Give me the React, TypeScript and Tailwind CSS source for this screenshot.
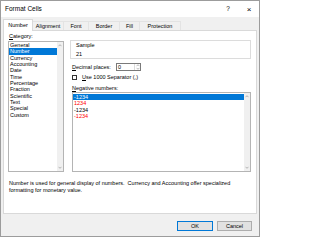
const categories = [
    'General',
    'Number',
    'Currency',
    'Accounting',
    'Date',
    'Time',
    'Percentage',
    'Fraction',
    'Scientific',
    'Text',
    'Special',
    'Custom',
];

const negatives = [
    { label: '-1234', red: false },
    { label: '1234', red: true },
    { label: '-1234', red: false },
    { label: '-1234', red: true },
];

const tabs = [
    { label: 'Number', w: 'w-[30px]' },
    { label: 'Alignment', w: 'w-[31px]' },
    { label: 'Font', w: 'w-[25px]' },
    { label: 'Border', w: 'w-[31px]' },
    { label: 'Fill', w: 'w-[20px]' },
    { label: 'Protection', w: 'w-[41px]' },
];

function Arrow({ down }: { down?: boolean }) {
    return (
        <svg width="4" height="3" viewBox="0 0 4 3" className="block">
            <path d={down ? 'M0.5 0.8 L2 2.3 L3.5 0.8' : 'M0.5 2.2 L2 0.7 L3.5 2.2'} fill="none" stroke="#9a9a9a" strokeWidth="0.7" />
        </svg>
    );
}

function ScrollBar() {
    return (
        <div className="flex h-full w-[6px] flex-col items-center justify-between bg-[#f0f0f0] py-[2px]">
            <Arrow />
            <Arrow down />
        </div>
    );
}

export default function App() {
    return (
        <div className="flex h-[237px] w-[260px] flex-col overflow-hidden border border-[#9c9c9c] bg-[#f0f0f0] font-['Liberation_Sans',Arial,sans-serif] text-[5.5px] leading-[6.35px] text-black">
            {/* title bar */}
            <div className="flex h-[16px] shrink-0 items-center bg-white pl-[4px] text-[6.5px] leading-[8px]">
                <span>Format Cells</span>
                <span className="ml-auto w-[8px] text-center">?</span>
                <span className="ml-[13px] mr-[6px] w-[8px] text-center text-[8px] leading-[9px]">×</span>
            </div>

            <div className="flex flex-1 flex-col px-[2px] pt-[2px]">
                {/* tabs */}
                <div className="flex h-[12px] items-end">
                    {tabs.map((t, i) =>
                        i === 0 ? (
                            <div key={t.label} className={`${t.w} relative z-10 flex h-[12px] items-center justify-center border border-b-0 border-[#d9d9d9] bg-white`}>
                                {t.label}
                            </div>
                        ) : (
                            <div key={t.label} className={`${t.w} flex h-[10px] items-center justify-center border border-b-0 border-l-0 border-[#e3e3e3] bg-[#f0f0f0]`}>
                                {t.label}
                            </div>
                        ),
                    )}
                </div>

                {/* panel */}
                <div className="-mt-px flex h-[184px] flex-col border border-[#d9d9d9] bg-white pl-[4px]">
                    <div className="flex gap-[6px]">
                        {/* category column */}
                        <div className="flex flex-col pt-[2px]">
                            <div className="h-[6px] pl-[1px] leading-[6.35px]">
                                <span className="underline">C</span>ategory:
                            </div>
                            <div className="mt-[2px] flex h-[131px] w-[56px] border border-[#b4b4b4]">
                                <div className="flex-1">
                                    {categories.map((c) => (
                                        <div key={c} className={c === 'Number' ? 'bg-[#0078d7] pl-[1px] text-white' : 'pl-[1px]'}>
                                            {c}
                                        </div>
                                    ))}
                                </div>
                                <ScrollBar />
                            </div>
                        </div>

                        {/* options column */}
                        <div className="flex w-[181px] flex-col pt-[9px]">
                            <div className="flex h-[19px] flex-col border border-[#dcdcdc] pl-[5px] pt-[1px]">
                                <div>Sample</div>
                                <div className="mt-[3px]">21</div>
                            </div>

                            <div className="mt-[4px] flex h-[8px] items-center pl-[2px]">
                                <span className="w-[44px]">
                                    <span className="underline">D</span>ecimal places:
                                </span>
                                <div className="flex h-[8px] w-[25px] items-center border border-[#7a7a7a]">
                                    <span className="flex-1 pl-[1px]">0</span>
                                    <div className="flex h-full w-[6px] flex-col items-center justify-center border-l border-[#dcdcdc]">
                                        <Arrow />
                                        <Arrow down />
                                    </div>
                                </div>
                            </div>

                            <div className="mt-[3px] flex h-[6px] items-center pl-[2px]">
                                <div className="h-[5px] w-[5px] border border-[#333]" />
                                <span className="ml-[5px]">
                                    <span className="underline">U</span>se 1000 Separator (,)
                                </span>
                            </div>

                            <div className="mt-[5px] h-[6px] pl-[2px] leading-[6.35px]">
                                <span className="underline">N</span>egative numbers:
                            </div>

                            <div className="ml-[2px] mt-[1px] flex h-[80px] w-[179px] border border-[#b4b4b4]">
                                <div className="flex-1 pt-[1px]">
                                    {negatives.map((n, i) => (
                                        <div
                                            key={i}
                                            className={i === 0 ? 'bg-[#0078d7] pl-[1px] text-white' : n.red ? 'pl-[1px] text-[#ff0000]' : 'pl-[1px]'}
                                        >
                                            {n.label}
                                        </div>
                                    ))}
                                </div>
                                <ScrollBar />
                            </div>
                        </div>
                    </div>

                    <div className="mt-[8px] pl-[1px] leading-[7px]">
                        <div>Number is used for general display of numbers.&nbsp; Currency and Accounting offer specialized</div>
                        <div>formatting for monetary value.</div>
                    </div>
                </div>

                {/* buttons */}
                <div className="mt-[7px] flex justify-end gap-[4px] pr-[5px]">
                    <button className="h-[10px] w-[36px] border border-[#0078d7] bg-[#e1e1e1] text-[5.5px] leading-[6.35px]">OK</button>
                    <button className="h-[10px] w-[35px] border border-[#adadad] bg-[#e1e1e1] text-[5.5px] leading-[6.35px]">Cancel</button>
                </div>
            </div>
        </div>
    );
}
